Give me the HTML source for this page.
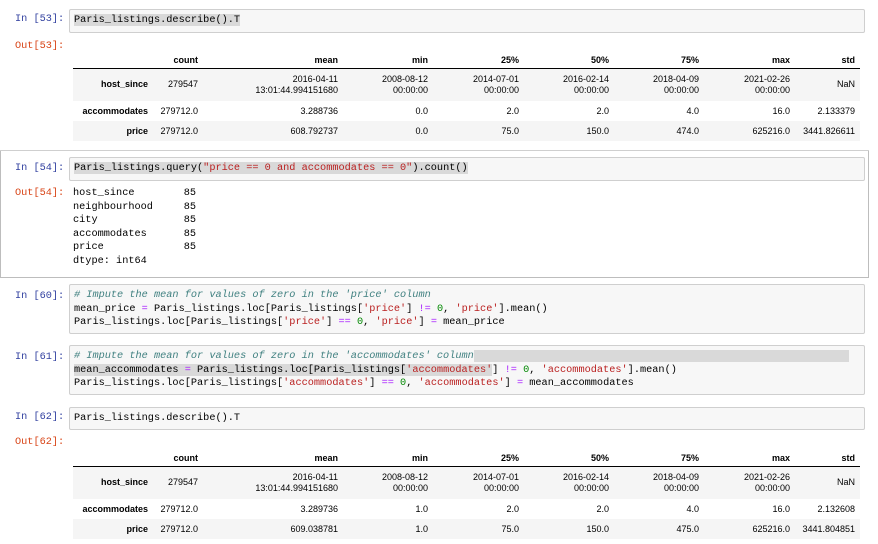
<!DOCTYPE html>
<html><head><meta charset="utf-8"><style>
*{margin:0;padding:0;box-sizing:border-box}
body{width:878px;height:544px;background:#fff;position:relative;overflow:hidden;font-family:"Liberation Sans",Arial,sans-serif}
.mono{font-family:"Liberation Mono",monospace;font-size:10.25px;line-height:13.6px;white-space:pre}
.pin{position:absolute;left:15px;color:#303f9f}
.pout{position:absolute;left:15px;color:#d84315}
.box{position:absolute;left:69px;width:796px;background:#f7f7f7;border:1px solid #cfcfcf;border-radius:2px;padding:4px 0 0 4px}
.s{color:#ba2121}.n{color:#080}.o{color:#a2f}.c{color:#408080;font-style:italic}
.sel{background:#d9d9d9}
table{position:absolute;left:73px;border-collapse:collapse;table-layout:fixed;font-size:9px;color:#000}
td,th{text-align:right;padding:0 5px 0 0;white-space:nowrap}
th{font-weight:bold}
thead th{height:17.5px;border-bottom:1.5px solid #000}
tr.g{background:#f5f5f5}
tr.r1 td,tr.r1 th{height:32px;line-height:11px}
tr.r2 td,tr.r2 th{height:20px}
.sep{position:absolute;left:0;width:869px;height:1px;background:#cfcfcf}
</style></head><body>

<div class="mono pin" style="top:13px">In [53]:</div>
<div class="box mono" style="top:9px;height:24px"><span class="sel">Paris_listings.describe().T</span></div>
<div class="mono pout" style="top:40px">Out[53]:</div>
<table style="top:51px;width:787px">
<colgroup><col style="width:80px"><col style="width:50px"><col style="width:140px"><col style="width:90px"><col style="width:91px"><col style="width:90px"><col style="width:90px"><col style="width:91px"><col style="width:65px"></colgroup>
<thead><tr><th></th><th>count</th><th>mean</th><th>min</th><th>25%</th><th>50%</th><th>75%</th><th>max</th><th>std</th></tr></thead>
<tbody>
<tr class="g r1"><th>host_since</th><td>279547</td><td>2016-04-11<br>13:01:44.994151680</td><td>2008-08-12<br>00:00:00</td><td>2014-07-01<br>00:00:00</td><td>2016-02-14<br>00:00:00</td><td>2018-04-09<br>00:00:00</td><td>2021-02-26<br>00:00:00</td><td>NaN</td></tr>
<tr class="r2"><th>accommodates</th><td>279712.0</td><td>3.288736</td><td>0.0</td><td>2.0</td><td>2.0</td><td>4.0</td><td>16.0</td><td>2.133379</td></tr>
<tr class="g r2"><th>price</th><td>279712.0</td><td>608.792737</td><td>0.0</td><td>75.0</td><td>150.0</td><td>474.0</td><td>625216.0</td><td>3441.826611</td></tr>
</tbody></table>

<div class="sep" style="top:150px"></div>
<div style="position:absolute;left:0;top:151px;width:869px;height:127px;border:1px solid #bdbdbd;border-top:none"></div>
<div class="mono pin" style="top:162px">In [54]:</div>
<div class="box mono" style="top:157px;height:24px"><span class="sel">Paris_listings.query(<span class="s">"price == 0 and accommodates == 0"</span>).count()</span></div>
<div class="mono pout" style="top:187px">Out[54]:</div>
<div class="mono" style="position:absolute;left:73px;top:187px;color:#000">host_since        85
neighbourhood     85
city              85
accommodates      85
price             85
dtype: int64</div>

<div class="mono pin" style="top:290px">In [60]:</div>
<div class="box mono" style="top:284px;height:50px"><span class="c"># Impute the mean for values of zero in the 'price' column</span>
mean_price <span class="o">=</span> Paris_listings.loc[Paris_listings[<span class="s">'price'</span>] <span class="o">!=</span> <span class="n">0</span>, <span class="s">'price'</span>].mean()
Paris_listings.loc[Paris_listings[<span class="s">'price'</span>] <span class="o">==</span> <span class="n">0</span>, <span class="s">'price'</span>] <span class="o">=</span> mean_price</div>

<div class="mono pin" style="top:351px">In [61]:</div>
<div class="box mono" style="top:345px;height:50px"><span class="c"># Impute the mean for values of zero in the 'accommodates' column</span><span class="sel">                                                             </span>
<span class="sel">mean_accommodates <span class="o">=</span> Paris_listings.loc[Paris_listings[<span class="s">'accommodates'</span></span>] <span class="o">!=</span> <span class="n">0</span>, <span class="s">'accommodates'</span>].mean()
Paris_listings.loc[Paris_listings[<span class="s">'accommodates'</span>] <span class="o">==</span> <span class="n">0</span>, <span class="s">'accommodates'</span>] <span class="o">=</span> mean_accommodates</div>

<div class="mono pin" style="top:411px">In [62]:</div>
<div class="box mono" style="top:407px;height:23px">Paris_listings.describe().T</div>
<div class="mono pout" style="top:436px">Out[62]:</div>
<table style="top:449px;width:787px">
<colgroup><col style="width:80px"><col style="width:50px"><col style="width:140px"><col style="width:90px"><col style="width:91px"><col style="width:90px"><col style="width:90px"><col style="width:91px"><col style="width:65px"></colgroup>
<thead><tr><th></th><th>count</th><th>mean</th><th>min</th><th>25%</th><th>50%</th><th>75%</th><th>max</th><th>std</th></tr></thead>
<tbody>
<tr class="g r1"><th>host_since</th><td>279547</td><td>2016-04-11<br>13:01:44.994151680</td><td>2008-08-12<br>00:00:00</td><td>2014-07-01<br>00:00:00</td><td>2016-02-14<br>00:00:00</td><td>2018-04-09<br>00:00:00</td><td>2021-02-26<br>00:00:00</td><td>NaN</td></tr>
<tr class="r2"><th>accommodates</th><td>279712.0</td><td>3.289736</td><td>1.0</td><td>2.0</td><td>2.0</td><td>4.0</td><td>16.0</td><td>2.132608</td></tr>
<tr class="g r2"><th>price</th><td>279712.0</td><td>609.038781</td><td>1.0</td><td>75.0</td><td>150.0</td><td>475.0</td><td>625216.0</td><td>3441.804851</td></tr>
</tbody></table>
</body></html>
